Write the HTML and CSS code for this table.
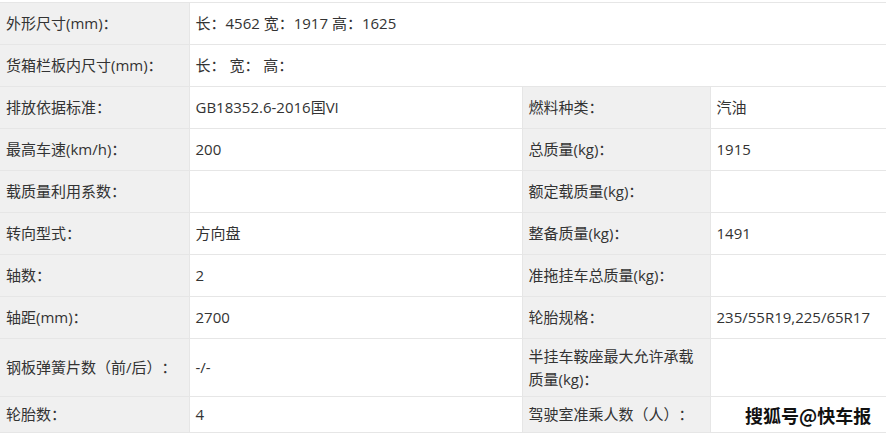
FILE: index.html
```html
<!DOCTYPE html>
<html lang="zh-CN">
<head>
<meta charset="utf-8">
<title>车辆参数</title>
<link rel="stylesheet" href="styles.css">
</head>
<body>
<div class="page">
  <table class="spec">
    <colgroup>
      <col class="c-label">
      <col class="c-value">
      <col class="c-label2">
      <col class="c-value2">
    </colgroup>
    <tbody>
      <tr><td class="lab">外形尺寸(mm)：</td><td class="val" colspan="3">长：4562 宽：1917 高：1625</td></tr>
      <tr><td class="lab">货箱栏板内尺寸(mm)：</td><td class="val" colspan="3">长：&nbsp;宽：&nbsp;高：</td></tr>
      <tr><td class="lab">排放依据标准：</td><td class="val">GB18352.6-2016国VI</td><td class="lab">燃料种类：</td><td class="val">汽油</td></tr>
      <tr><td class="lab">最高车速(km/h)：</td><td class="val">200</td><td class="lab">总质量(kg)：</td><td class="val">1915</td></tr>
      <tr><td class="lab">载质量利用系数：</td><td class="val"></td><td class="lab">额定载质量(kg)：</td><td class="val"></td></tr>
      <tr><td class="lab">转向型式：</td><td class="val">方向盘</td><td class="lab">整备质量(kg)：</td><td class="val">1491</td></tr>
      <tr><td class="lab">轴数：</td><td class="val">2</td><td class="lab">准拖挂车总质量(kg)：</td><td class="val"></td></tr>
      <tr><td class="lab">轴距(mm)：</td><td class="val">2700</td><td class="lab">轮胎规格：</td><td class="val">235/55R19,225/65R17</td></tr>
      <tr class="tall"><td class="lab">钢板弹簧片数（前/后）：</td><td class="val">-/-</td><td class="lab">半挂车鞍座最大允许承载<br>质量(kg)：</td><td class="val"></td></tr>
      <tr class="last"><td class="lab">轮胎数：</td><td class="val">4</td><td class="lab">驾驶室准乘人数（人）：</td><td class="val"></td></tr>
    </tbody>
  </table>
  <div class="watermark">搜狐号@快车报</div>
</div>
</body>
</html>
```
FILE: styles.css
```css
html, body {
  margin: 0;
  padding: 0;
  background: #ffffff;
}
body {
  font-family: "Open Sans", "Noto Sans CJK SC", sans-serif;
  font-size: 15px;
  color: #333333;
  overflow: hidden;
  text-spacing-trim: space-all;
}
.page {
  position: relative;
  width: 886px;
  height: 434px;
  padding-top: 2px;
  box-sizing: border-box;
  overflow: hidden;
}
.spec {
  width: 900px;
  table-layout: fixed;
  border-collapse: collapse;
}
.c-label { width: 189px; }
.c-value { width: 333px; }
.c-label2 { width: 188px; }
.c-value2 { width: 190px; }
.spec td {
  height: 41px;
  padding: 0 6px;
  border: 1px solid #e6e6e6;
  line-height: 23px;
  vertical-align: middle;
  white-space: nowrap;
}
.spec td.lab {
  background: #f0f0f0;
}
.spec td.val {
  background: #ffffff;
}
.spec td:first-child { border-left: 0; }
.spec tr.tall td {
  height: 57px;
}
.spec tr.last td {
  height: 35px;
}
.watermark {
  position: absolute;
  left: 745px;
  top: 403px;
  font-family: "Noto Sans CJK SC", sans-serif;
  font-size: 18px;
  font-weight: 700;
  color: #111111;
  line-height: 24px;
  text-shadow: 1px 0 0 #fff, -1px 0 0 #fff, 0 1px 0 #fff, 0 -1px 0 #fff;
}
```
